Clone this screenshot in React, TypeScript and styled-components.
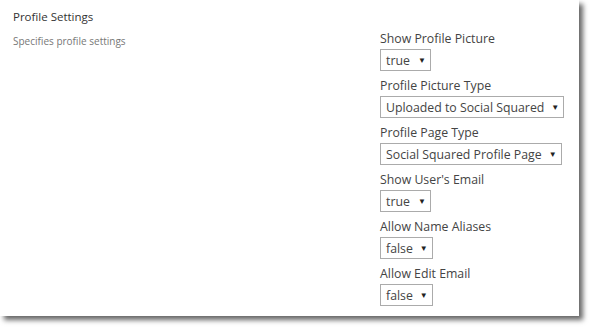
import React from 'react'
import styled, {createGlobalStyle} from 'styled-components'

const GlobalStyle = createGlobalStyle`
  html, body {
    margin: 0;
    padding: 0;
    background: #ffffff;
  }
  body {
    font-family: 'Open Sans', 'Noto Sans', sans-serif;
    color: #444444;
  }
`

const Page = styled.div`
  width: 593px;
  height: 332px;
  overflow: hidden;
  background: #ffffff;
`

const Panel = styled.div`
  width: 579px;
  height: 316px;
  background: #ffffff;
  box-shadow: 4px 4px 5px rgba(0, 0, 0, 0.6);
  display: flex;
`

const Intro = styled.div`
  width: 367px;
  padding: 9px 0 0 13px;
`

const Title = styled.div`
  font-size: 11.5px;
  color: #333333;
  line-height: 16px;
`

const Description = styled.div`
  margin-top: 9px;
  font-size: 10px;
  color: #777777;
  line-height: 14px;
`

const Fields = styled.div`
  padding-top: 30px;
  display: flex;
  flex-direction: column;
  gap: 6px;
`

const Field = styled.div`
  display: flex;
  flex-direction: column;
  align-items: flex-start;
  gap: 2px;
`

const Label = styled.div`
  font-size: 12.3px;
  line-height: 17px;
  color: #444444;
`

const Select = styled.div<{$width?: number}>`
  box-sizing: border-box;
  height: 22px;
  min-width: ${({$width}) => ($width ? `${$width}px` : 'auto')};
  border: 1px solid #ababab;
  display: flex;
  align-items: center;
  justify-content: space-between;
  gap: 7px;
  padding: 0 4px 0 5px;
  font-size: 12.3px;
  color: #444444;
  background: #ffffff;
`

const Arrow = styled.span`
  font-size: 8px;
  color: #222222;
  align-self: flex-start;
  margin-top: 4px;
`

const fields = [
  {label: 'Show Profile Picture', value: 'true', width: 51},
  {label: 'Profile Picture Type', value: 'Uploaded to Social Squared'},
  {label: 'Profile Page Type', value: 'Social Squared Profile Page'},
  {label: "Show User's Email", value: 'true', width: 51},
  {label: 'Allow Name Aliases', value: 'false', width: 51},
  {label: 'Allow Edit Email', value: 'false', width: 51},
]

const App = () => (
  <Page>
    <GlobalStyle/>
    <Panel>
      <Intro>
        <Title>Profile Settings</Title>
        <Description>Specifies profile settings</Description>
      </Intro>
      <Fields>
        {fields.map((field) => (
          <Field key={field.label}>
            <Label>{field.label}</Label>
            <Select $width={field.width}>
              <span>{field.value}</span>
              <Arrow>▼</Arrow>
            </Select>
          </Field>
        ))}
      </Fields>
    </Panel>
  </Page>
)

export default App
